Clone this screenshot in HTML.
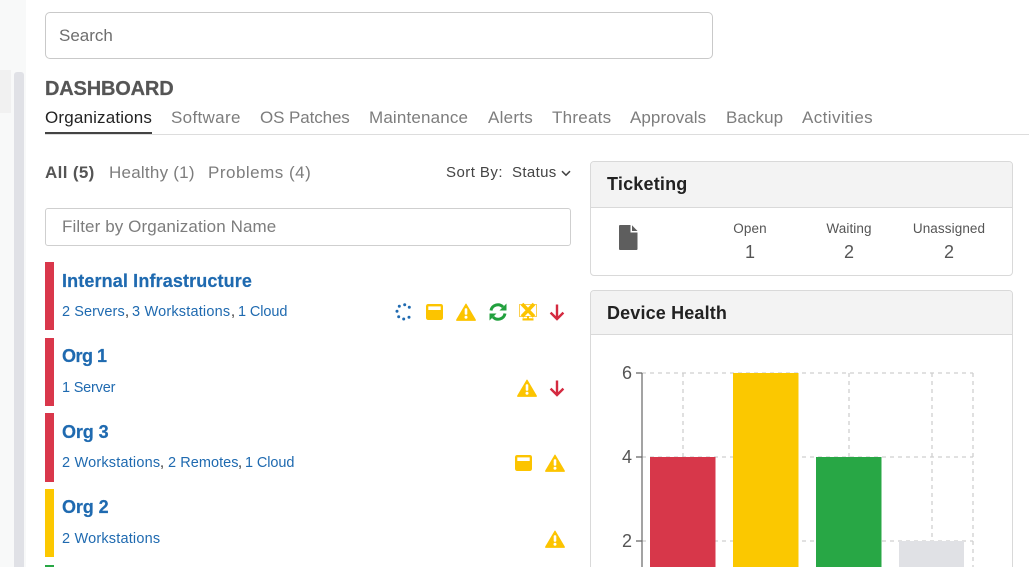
<!DOCTYPE html>
<html><head><meta charset="utf-8"><style>
html,body{margin:0;padding:0;background:#fff;width:1029px;height:567px;overflow:hidden}
#w{position:relative;width:1029px;height:567px;overflow:hidden;font-family:"Liberation Sans",sans-serif}
.t{position:absolute;white-space:nowrap;line-height:20px;height:20px}
.b{position:absolute}
.tab{top:107.5px;font-size:17px;color:#7d7d7d}
.lnk{font-size:14.5px;color:#1f6ab0}
.org{font-size:18px;font-weight:bold;color:#1f6ab0;letter-spacing:.13px;-webkit-text-stroke:.2px #1f6ab0}
.c{font-size:14.5px;color:#333}
svg{position:absolute;overflow:visible}
</style></head><body><div id="w">
<div class="b" style="left:0;top:0;width:26px;height:567px;background:#f8f9f9"></div>
<div class="b" style="left:0;top:70px;width:11px;height:43px;background:#f1f1f1"></div>
<div class="b" style="left:14px;top:72px;width:10px;height:495px;background:#e0e1e6;border-radius:3px 3px 0 0"></div>

<div class="b" style="left:45px;top:12px;width:666px;height:45px;border:1px solid #c9c9c9;border-radius:5px"></div>
<div class="t" style="left:59px;top:25.5px;font-size:17px;color:#6e6e6e">Search</div>
<div class="t" style="left:45px;top:78.5px;font-size:20px;font-weight:bold;color:#555;letter-spacing:-.17px;-webkit-text-stroke:.25px #555">DASHBOARD</div>

<div class="t tab" style="left:45px;color:#222;letter-spacing:.17px">Organizations</div>
<div class="t tab" style="left:171px;letter-spacing:.33px">Software</div>
<div class="t tab" style="left:260px;letter-spacing:-.1px">OS Patches</div>
<div class="t tab" style="left:369px;letter-spacing:.16px">Maintenance</div>
<div class="t tab" style="left:488px;letter-spacing:.27px">Alerts</div>
<div class="t tab" style="left:552px;letter-spacing:.25px">Threats</div>
<div class="t tab" style="left:630px;letter-spacing:.07px">Approvals</div>
<div class="t tab" style="left:726px;letter-spacing:.07px">Backup</div>
<div class="t tab" style="left:802px;letter-spacing:.4px">Activities</div>
<div class="b" style="left:45px;top:134px;width:984px;height:1px;background:#ddd"></div>
<div class="b" style="left:45px;top:132px;width:107px;height:2px;background:#444"></div>

<div class="t" style="left:45px;top:162.5px;font-size:17px;font-weight:bold;color:#555;letter-spacing:.35px">All (5)</div>
<div class="t" style="left:109px;top:162.5px;font-size:17px;color:#7d7d7d;letter-spacing:.24px">Healthy (1)</div>
<div class="t" style="left:208px;top:162.5px;font-size:17px;color:#7d7d7d;letter-spacing:.5px">Problems (4)</div>
<div class="t" style="left:446px;top:162.5px;font-size:15px;color:#444;letter-spacing:.45px">Sort By:</div>
<div class="t" style="left:512px;top:162.5px;font-size:15px;color:#444;letter-spacing:.35px">Status</div>
<svg style="left:561px;top:170px" width="10" height="7" viewBox="0 0 10 7"><path d="M1 1.2L5 5.2L9 1.2" fill="none" stroke="#444" stroke-width="1.5"/></svg>

<div class="b" style="left:45px;top:208px;width:524px;height:36px;border:1px solid #cfcfcf;border-radius:3px"></div>
<div class="t" style="left:62px;top:217px;font-size:17px;color:#7d7d7d;letter-spacing:.1px">Filter by Organization Name</div>

<div class="b" style="left:45px;top:262px;width:9px;height:68px;background:#d9374b"></div>
<div class="b" style="left:45px;top:338px;width:9px;height:68px;background:#d9374b"></div>
<div class="b" style="left:45px;top:413px;width:9px;height:69px;background:#d9374b"></div>
<div class="b" style="left:45px;top:489px;width:9px;height:68px;background:#fcc800"></div>
<div class="b" style="left:45px;top:565px;width:9px;height:2px;background:#28a745"></div>

<div class="t org" style="left:62px;top:271px">Internal Infrastructure</div>
<div class="t lnk" style="left:62px;top:301.5px;letter-spacing:.08px">2 Servers</div><div class="t c" style="left:125px;top:301.5px">,</div>
<div class="t lnk" style="left:132px;top:301.5px;letter-spacing:.19px">3 Workstations</div><div class="t c" style="left:231px;top:301.5px">,</div>
<div class="t lnk" style="left:238px;top:301.5px;letter-spacing:-.1px">1 Cloud</div>

<div class="t org" style="left:62px;top:346px;letter-spacing:-.5px">Org 1</div>
<div class="t lnk" style="left:62px;top:378px;letter-spacing:-.2px">1 Server</div>

<div class="t org" style="left:62px;top:422px;letter-spacing:-.1px">Org 3</div>
<div class="t lnk" style="left:62px;top:452.5px;letter-spacing:.19px">2 Workstations</div><div class="t c" style="left:160px;top:452.5px">,</div>
<div class="t lnk" style="left:168px;top:452.5px;letter-spacing:.05px">2 Remotes</div><div class="t c" style="left:238px;top:452.5px">,</div>
<div class="t lnk" style="left:245px;top:452.5px;letter-spacing:-.1px">1 Cloud</div>

<div class="t org" style="left:62px;top:497px;letter-spacing:-.1px">Org 2</div>
<div class="t lnk" style="left:62px;top:529px;letter-spacing:.19px">2 Workstations</div>

<svg width="0" height="0" style="position:absolute"><defs>
<g id="warn"><path d="M10 1L19.3 16.8Q19.6 17.4 19 17.4H1Q.4 17.4 .7 16.8Z" fill="#fcc400" stroke="#fcc400" stroke-width="1" stroke-linejoin="round"/><rect x="8.7" y="5.2" width="2.6" height="6.5" rx="1" fill="#fff"/><circle cx="10" cy="14.2" r="1.5" fill="#fff"/></g>
<g id="card"><rect x="0" y="0" width="17" height="16" rx="2.2" fill="#fcc400"/><rect x="2.3" y="2.4" width="12.4" height="3.6" fill="#fff"/></g>
<g id="down"><path d="M8 .5V15M1.6 8.6L8 15L14.4 8.6" fill="none" stroke="#d42a40" stroke-width="2.4"/></g>
</defs></svg>

<svg style="left:0;top:0" width="420" height="330" fill="#1f6ab0"><circle cx="404.7" cy="304.7" r="1.5"/><circle cx="409.3" cy="307.3" r="1.5"/><circle cx="409" cy="317.3" r="1.5"/><circle cx="403.7" cy="319" r="1.5"/><circle cx="398.7" cy="316.7" r="1.5"/><circle cx="397" cy="311.3" r="1.5"/><circle cx="399.3" cy="306.3" r="1.5"/></svg>
<svg style="left:426px;top:304px" width="17" height="16"><use href="#card"/></svg>
<svg style="left:456px;top:303px" width="20" height="18"><use href="#warn"/></svg>
<svg style="left:489px;top:303px" width="18" height="18" viewBox="0 0 18 18"><path d="M2 7.5A7 7 0 0 1 14 4" fill="none" stroke="#21a03d" stroke-width="3"/><path d="M10.5 7.5H17.5V.5Z" fill="#21a03d"/><path d="M16 10.5A7 7 0 0 1 4 14" fill="none" stroke="#21a03d" stroke-width="3"/><path d="M7.5 10.5H.5V17.5Z" fill="#21a03d"/></svg>
<svg style="left:519px;top:303px" width="18" height="18" viewBox="0 0 18 18"><rect x=".5" y="1.5" width="17" height="12" fill="none" stroke="#fcd050" stroke-width="1"/><path d="M3 1L15 13.5M15 1L3 13.5" stroke="#fcc400" stroke-width="3.6"/><rect x="8" y="13" width="2" height="3" fill="#fcc400"/><rect x="3.5" y="15.3" width="11" height="2.2" fill="#fcc400"/></svg>
<svg style="left:549px;top:304px" width="16" height="16"><use href="#down"/></svg>

<svg style="left:517px;top:379px" width="20" height="18"><use href="#warn"/></svg>
<svg style="left:549px;top:379.5px" width="16" height="16"><use href="#down"/></svg>

<svg style="left:515px;top:455px" width="17" height="16"><use href="#card"/></svg>
<svg style="left:545px;top:454px" width="20" height="18"><use href="#warn"/></svg>
<svg style="left:545px;top:530px" width="20" height="18"><use href="#warn"/></svg>

<!-- Ticketing -->
<div class="b" style="left:590px;top:161px;width:421px;height:113px;border:1px solid #d9d9d9;border-radius:4px;overflow:hidden">
<div style="height:45px;background:#f3f3f3;border-bottom:1px solid #d9d9d9"></div></div>
<div class="t" style="left:607px;top:174px;font-size:18px;font-weight:bold;color:#222;letter-spacing:.2px">Ticketing</div>
<svg style="left:619px;top:225px" width="19" height="25" viewBox="0 0 19 25"><path d="M1 0H11.5V7.5H18.5V24Q18.5 25 17.5 25H1Q0 25 0 24V1Q0 0 1 0ZM13 .3L18.5 6H13Z" fill="#5e5e5e"/></svg>
<div class="t" style="left:700px;width:100px;text-align:center;top:219px;font-size:13.5px;color:#555;letter-spacing:.1px">Open</div>
<div class="t" style="left:800px;width:98px;text-align:center;top:219px;font-size:13.5px;color:#555;letter-spacing:.1px">Waiting</div>
<div class="t" style="left:899px;width:100px;text-align:center;top:219px;font-size:13.5px;color:#555;letter-spacing:.1px">Unassigned</div>
<div class="t" style="left:700px;width:100px;text-align:center;top:242px;font-size:18px;color:#555">1</div>
<div class="t" style="left:800px;width:98px;text-align:center;top:242px;font-size:18px;color:#555">2</div>
<div class="t" style="left:899px;width:100px;text-align:center;top:242px;font-size:18px;color:#555">2</div>

<!-- Device Health -->
<div class="b" style="left:590px;top:290px;width:421px;height:290px;border:1px solid #d9d9d9;border-radius:4px;overflow:hidden">
<div style="height:43px;background:#f3f3f3;border-bottom:1px solid #d9d9d9"></div></div>
<div class="t" style="left:607px;top:303px;font-size:18px;font-weight:bold;color:#222;letter-spacing:.15px">Device Health</div>

<svg style="left:0;top:0" width="1029" height="567">
<g stroke="#cfcfcf" stroke-width="1.3" stroke-dasharray="4 4" fill="none">
<path d="M642 373H973M642 457H973M642 541H973"/>
<path d="M683 373V567M766 373V567M849 373V567M932 373V567M973 373V567"/>
</g>
<rect x="650" y="457" width="65.5" height="110" fill="#d7374a"/>
<rect x="733" y="373" width="65.5" height="194" fill="#fbc800"/>
<rect x="816" y="457" width="65.5" height="110" fill="#28a745"/>
<rect x="899" y="541" width="65" height="26" fill="#e0e1e5"/>
<path d="M642 373V567M636 373H642M636 457H642M636 541H642" stroke="#666" stroke-width="1.2" fill="none"/>
<g font-family="Liberation Sans, sans-serif" font-size="18" fill="#555" text-anchor="end">
<text x="632" y="379">6</text><text x="632" y="463">4</text><text x="632" y="547">2</text>
</g>
</svg>
</div></body></html>
